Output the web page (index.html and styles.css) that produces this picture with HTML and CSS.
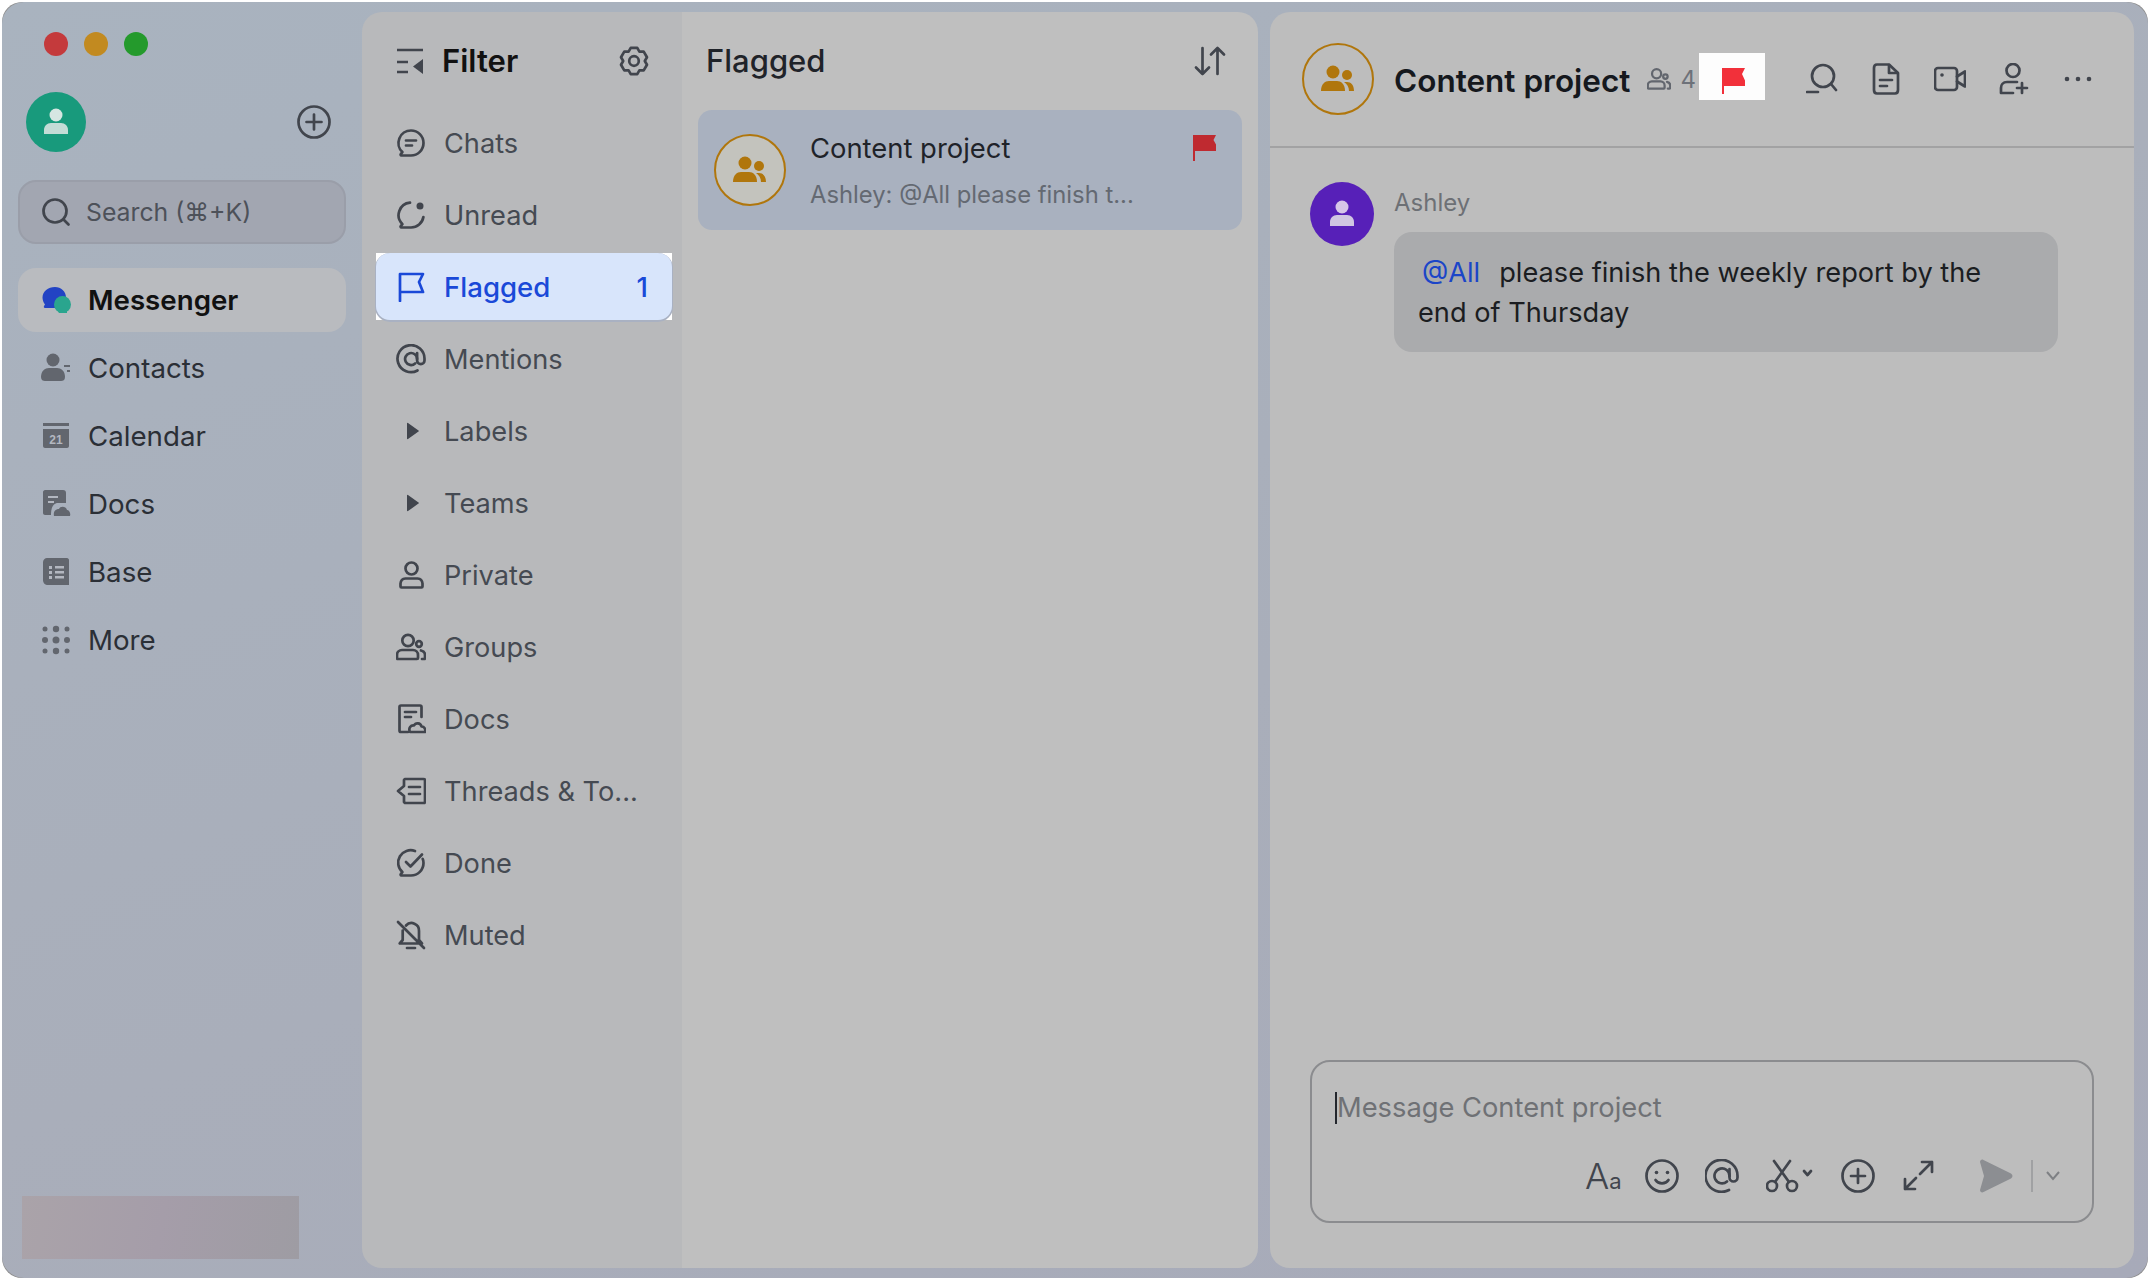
FILE: index.html
```html
<!DOCTYPE html>
<html lang="en">
<head>
<meta charset="utf-8">
<title>Messenger</title>
<link rel="stylesheet" href="styles.css">
</head>
<body>
<div class="frame">
<div class="window">
  <aside class="sidebar">
    <div class="lights"><i class="light red"></i><i class="light amber"></i><i class="light green"></i></div>
    <div class="user-row">
      <div class="avatar-me"><svg width="36" height="36" viewBox="0 0 36 36"><circle cx="18" cy="11" r="6.500" fill="#d6e6e2"/><path d="M6 30v-4c0-4 3-7 7-7h10c4 0 7 3 7 7v4z" fill="#c3dcd6"/></svg></div>
      <svg class="ico" width="36" height="36" viewBox="0 0 36 36"><circle cx="18" cy="18" r="15.500"/><path d="M18 10.500v15M10.500 18h15"/></svg>
    </div>
    <div class="search">
      <svg class="ico" width="30" height="30" viewBox="0 0 30 30"><circle cx="14" cy="14" r="11.500"/><path d="M22.500 22.500l5 5"/></svg>
      <span>Search (⌘+K)</span>
    </div>
    <nav class="nav">
      <a class="nav-item current">
        <svg width="32" height="32" viewBox="0 0 32 32"><path d="M15 3c6 0 11 4.500 11 10.500 0 6-4.500 10-10 10.500H5c-1 0-1.500-1-1-2l1-1.500C3.500 18.500 2.500 16 2.500 13.500 2.500 7.500 8 3 15 3z" fill="#2243c4"/><circle cx="22.500" cy="20.500" r="8.500" fill="#2aa58e"/><path d="M17 26h10v3H19z" fill="#2aa58e"/></svg>
        <span>Messenger</span>
      </a>
      <a class="nav-item">
        <svg width="32" height="32" viewBox="0 0 32 32"><circle cx="13" cy="8" r="6.500" fill="#62666e"/><path d="M1 25c0-6 4-9 8-9h8c4 0 8 3 8 9 0 3-2 4-4 4H5c-2 0-4-1-4-4z" fill="#62666e"/><path d="M24 13h6v2h-6zM27 18h3v2h-3z" fill="#62666e"/></svg>
        <span>Contacts</span>
      </a>
      <a class="nav-item">
        <svg width="32" height="32" viewBox="0 0 32 32"><path d="M3 3h26v3H3z" fill="#62666e"/><path d="M3 9h26v17c0 1-1 2-2 2H5c-1 0-2-1-2-2z" fill="#62666e"/><text x="16" y="24" class="cal-num">21</text></svg>
        <span>Calendar</span>
      </a>
      <a class="nav-item">
        <svg width="32" height="32" viewBox="0 0 32 32"><path d="M5 2h18c2 0 3 1 3 3v10h-8c-4 0-7 4-7 11v1H5c-1 0-2-1-2-2V4c0-1 1-2 2-2z" fill="#62666e"/><path d="M8 8h10v2H8zM8 13h6v2H8z" fill="#b3b7c0"/><path d="M14 28c-1-5 2-7 5-7 1-3 7-3 8 1 2 0 4 3 3 6z" fill="#62666e"/></svg>
        <span>Docs</span>
      </a>
      <a class="nav-item">
        <svg width="32" height="32" viewBox="0 0 32 32"><path d="M7 2h20c1 0 2 1 2 2v25H8c-3 0-5-2-5-5V6c0-2 2-4 4-4z" fill="#62666e"/><path d="M9 10h3v3H9zM15 10h9v2.500h-9zM9 15h3v3H9zM15 15h9v2.500h-9zM9 20h3v3H9zM15 20h9v2.500h-9z" fill="#b3b7c0"/></svg>
        <span>Base</span>
      </a>
      <a class="nav-item">
        <svg width="32" height="32" viewBox="0 0 32 32" fill="#62666e"><circle cx="5" cy="5" r="2.500"/><circle cx="16" cy="5" r="3.200"/><circle cx="27" cy="5" r="2.500"/><circle cx="5" cy="16" r="3"/><circle cx="16" cy="16" r="3.500"/><circle cx="27" cy="16" r="3"/><circle cx="5" cy="27" r="2.500"/><circle cx="16" cy="27" r="3.200"/><circle cx="27" cy="27" r="2.500"/></svg>
        <span>More</span>
      </a>
    </nav>
    <div class="redacted"></div>
  </aside>

  <section class="filter-panel">
    <header class="filter-head">
      <svg width="28" height="26" viewBox="0 0 28 26" class="filter-ico"><path d="M1 2h26M1 14h11M1 24h11" fill="none" stroke="currentColor" stroke-width="2.500"/><path d="M27 11v15l-10-7.500z" fill="currentColor"/></svg>
      <h2>Filter</h2>
      <svg class="ico gear" width="30" height="30" viewBox="0 0 30 30"><path d="M11.730 1.900L18.270 1.900 20.400 5.650 24.710 5.620 27.980 11.280 25.800 15 27.980 18.720 24.710 24.380 20.400 24.350 18.270 28.100 11.730 28.100 9.600 24.350 5.290 24.380 2.020 18.720 4.200 15 2.020 11.280 5.290 5.620 9.600 5.650z"/><circle cx="15" cy="15" r="4.800"/></svg>
    </header>
    <ul class="filter-list">
      <li class="row"><svg class="ico" width="30" height="30" viewBox="0 0 30 30"><path d="M15 2.500a12.500 12.500 0 0 1 0 25H5.500c-1 0-1.200-1-.6-1.600l1.500-1.800A12.500 12.500 0 0 1 15 2.500z"/><path d="M10 12.500h10M10 17.500h6"/></svg><span>Chats</span></li>
      <li class="row"><svg class="ico" width="30" height="30" viewBox="0 0 30 30"><path d="M14 2.700A12.500 12.500 0 0 0 6.400 24.100l-1.500 1.800c-.6.600-.4 1.600.6 1.600H15A12.500 12.500 0 0 0 27.400 17"/><circle cx="24" cy="6" r="3.500" class="solid"/></svg><span>Unread</span></li>
      <li class="row-frame"><div class="row active"><svg class="ico" width="30" height="30" viewBox="0 0 30 30"><path d="M4 29V2h23l-4 8 4 10H4"/></svg><span>Flagged</span><b class="count">1</b></div></li>
      <li class="row"><svg class="ico" width="30" height="30" viewBox="0 0 30 30"><path d="M21.500 26.500A13.500 13.500 0 1 1 28.500 15v1.500a3.700 3.700 0 0 1-7.400 0V15a6 6 0 1 0-2 4.500"/><path d="M21.100 15v-6"/></svg><span>Mentions</span></li>
      <li class="row"><svg width="30" height="30" viewBox="0 0 30 30"><path d="M11 7.500v15a.7.700 0 0 0 1 .6l10.500-7.500a.7.700 0 0 0 0-1.200L12 6.900a.7.700 0 0 0-1 .6z" fill="#41454d"/></svg><span>Labels</span></li>
      <li class="row"><svg width="30" height="30" viewBox="0 0 30 30"><path d="M11 7.500v15a.7.700 0 0 0 1 .6l10.500-7.500a.7.700 0 0 0 0-1.200L12 6.900a.7.700 0 0 0-1 .6z" fill="#41454d"/></svg><span>Teams</span></li>
      <li class="row"><svg class="ico" width="30" height="30" viewBox="0 0 30 30"><circle cx="15.500" cy="8.500" r="6"/><path d="M9.500 18.500h12a5.500 5.500 0 0 1 5 5v3a1 1 0 0 1-1 1H5.500a1 1 0 0 1-1-1v-3a5.500 5.500 0 0 1 5-5z"/></svg><span>Private</span></li>
      <li class="row"><svg class="ico" width="30" height="30" viewBox="0 0 30 30"><circle cx="12" cy="8.500" r="5.700"/><path d="M6 18h11a5 5 0 0 1 5 5v3a1 1 0 0 1-1 1H2a1 1 0 0 1-1-1v-3a5 5 0 0 1 5-5z"/><circle cx="23" cy="12" r="2.800"/><path d="M25 18.500c2 .5 4 2 4 4.500v3a1 1 0 0 1-1 1h-2"/></svg><span>Groups</span></li>
      <li class="row"><svg class="ico" width="30" height="30" viewBox="0 0 30 30"><path d="M12 28H5c-1 0-1.500-.5-1.500-1.500V3c0-1 .5-1.500 1.500-1.500h19c1 0 1.500.5 1.500 1.500v10"/><path d="M9 8h11M9 13h6"/><path d="M14 28c-2-4 1-7 4-6.500 1.500-3 6.500-3 7.500 1 3 0 4.500 3 3.500 5.500z"/></svg><span>Docs</span></li>
      <li class="row"><svg class="ico" width="30" height="30" viewBox="0 0 30 30"><path d="M9 3h18.500c1 0 1.500.5 1.500 1.500v21c0 1-.5 1.500-1.500 1.500H9l-1-1v-6l-6-5 6-5V4z"/><path d="M13 11h11M13 18h11"/></svg><span>Threads &amp; To...</span></li>
      <li class="row"><svg class="ico" width="30" height="30" viewBox="0 0 30 30"><path d="M19 3A12.500 12.500 0 0 0 6.400 24.100l-1.500 1.800c-.6.600-.4 1.600.6 1.600H15A12.500 12.500 0 0 0 27.500 15c0-1.500-.2-3-.8-4"/><path d="M10 14l4.500 4.500L26 6.500"/></svg><span>Done</span></li>
      <li class="row"><svg class="ico" width="30" height="30" viewBox="0 0 30 30"><path d="M10 5.500A7.500 7.500 0 0 1 23 11v9l3 3.500M6.700 10.500V20l-3 3.500H22M11 28h8M2 2l26 26"/></svg><span>Muted</span></li>
    </ul>
  </section>

  <section class="list-panel">
    <header class="list-head">
      <h2>Flagged</h2>
      <svg class="ico" width="32" height="30" viewBox="0 0 32 30"><path d="M8.500 2v26M2 21.500L8.500 28l6.500-6.500M23.500 28V2M17 8.500L23.500 2 30 8.500"/></svg>
    </header>
    <article class="conv">
      <div class="group-avatar"><svg width="36" height="30" viewBox="0 0 36 30"><circle cx="13" cy="8" r="6.500" fill="#b0760c"/><circle cx="27" cy="11" r="5" fill="#b0760c"/><path d="M1 27c0-7 4-10 8-10h8c4 0 8 3 8 10z" fill="#b0760c"/><path d="M24 18h3c4 0 7 3 7 9h-5c0-4-2-7-5-9z" fill="#b0760c"/></svg></div>
      <div class="conv-body">
        <div class="conv-title"><span>Content project</span><svg width="24" height="28" viewBox="0 0 24 28"><path d="M1 1h23l-2.500 5 2.500 4.500V17H3v10H1z" fill="#bf2a30"/></svg></div>
        <p class="conv-preview">Ashley: @All please finish t...</p>
      </div>
    </article>
  </section>

  <section class="chat-panel">
    <header class="chat-head">
      <div class="group-avatar"><svg width="36" height="30" viewBox="0 0 36 30"><circle cx="13" cy="8" r="6.500" fill="#b0760c"/><circle cx="27" cy="11" r="5" fill="#b0760c"/><path d="M1 27c0-7 4-10 8-10h8c4 0 8 3 8 10z" fill="#b0760c"/><path d="M24 18h3c4 0 7 3 7 9h-5c0-4-2-7-5-9z" fill="#b0760c"/></svg></div>
      <h1>Content project</h1>
      <div class="members">
        <svg class="ico thin" width="24" height="24" viewBox="0 0 30 30"><circle cx="12" cy="8.500" r="5.700"/><path d="M6 18h11a5 5 0 0 1 5 5v3a1 1 0 0 1-1 1H2a1 1 0 0 1-1-1v-3a5 5 0 0 1 5-5z"/><circle cx="23" cy="12" r="2.800"/><path d="M25 18.500c2 .5 4 2 4 4.500v3a1 1 0 0 1-1 1h-2"/></svg>
        <span>4</span>
      </div>
      <div class="flag-tile"><svg width="24" height="26" viewBox="0 0 24 26"><path d="M1 0h23l-3 6 3 6.500V18H3v8H1z" fill="#f2303a"/></svg></div>
      <div class="head-tools">
        <svg class="ico" width="32" height="32" viewBox="0 0 32 32"><circle cx="17" cy="13" r="11"/><path d="M25 21l5 6M1 29h11"/></svg>
        <svg class="ico" width="32" height="32" viewBox="0 0 32 32"><path d="M7 1.500h12l9 8.500v17c0 2-1 3.500-3 3.500H7c-2 0-3-1.500-3-3.500V5c0-2 1-3.500 3-3.500z"/><path d="M19 2v8h8.500M10 17h12M10 23h7"/></svg>
        <svg class="ico" width="32" height="32" viewBox="0 0 32 32"><rect x="1" y="5" width="22" height="22" rx="3"/><path d="M23 13.500l8-5v15l-8-5"/><circle cx="8" cy="12" r="1.800" class="solid"/></svg>
        <svg class="ico" width="32" height="32" viewBox="0 0 32 32"><circle cx="15" cy="7.500" r="6.500"/><path d="M19 19H9c-4 0-6 3-6 6v5h12M24 20v10M19 25h10"/></svg>
        <svg width="32" height="32" viewBox="0 0 32 32" fill="#41454d"><circle cx="5" cy="16" r="2.300"/><circle cx="16" cy="16" r="2.300"/><circle cx="27" cy="16" r="2.300"/></svg>
      </div>
    </header>
    <div class="messages">
      <div class="avatar-sender"><svg width="36" height="36" viewBox="0 0 36 36"><circle cx="18" cy="11" r="6.500" fill="#d6c6e8"/><path d="M6 30v-4c0-4 3-7 7-7h10c4 0 7 3 7 7v4z" fill="#d0c6e2"/></svg></div>
      <div class="msg">
        <div class="msg-name">Ashley</div>
        <div class="bubble">
          <div class="bubble-line"><span class="at">@All</span><span>please finish the weekly report by the</span></div>
          <div class="bubble-line">end of Thursday</div>
        </div>
      </div>
    </div>
    <div class="composer">
      <div class="placeholder">Message Content project</div>
      <div class="tools">
        <span class="aa">A<small>a</small></span>
        <svg class="ico" width="34" height="34" viewBox="0 0 34 34"><circle cx="17" cy="17" r="15.500"/><circle cx="11.500" cy="13.500" r="1.800" class="solid"/><circle cx="22.500" cy="13.500" r="1.800" class="solid"/><path d="M10.500 21c3 4.500 10 4.500 13 0"/></svg>
        <svg class="ico" width="34" height="34" viewBox="0 0 34 34"><path d="M24 31A16 16 0 1 1 32.500 17v1.500a4 4 0 0 1-8 0V17a7.500 7.500 0 1 0-2.500 5.500"/><path d="M24.500 17v-7"/></svg>
        <svg class="ico cut" width="48" height="34" viewBox="0 0 48 34"><circle cx="6" cy="27" r="5"/><circle cx="26" cy="27" r="5"/><path d="M9 23L24 2M23 23L8 2"/><path d="M38 12l3.500 4 3.500-4"/></svg>
        <svg class="ico add" width="34" height="34" viewBox="0 0 34 34"><circle cx="17" cy="17" r="15.500"/><path d="M17 10v14M10 17h14"/></svg>
        <svg class="ico" width="34" height="34" viewBox="0 0 34 34"><path d="M19 15L31 3M21 3h10v10M15 19L4 30M4 20v10h10"/></svg>
        <svg class="send" width="34" height="34" viewBox="0 0 34 34"><path d="M1 3c0-2 2-3 3.500-2L32 14.500c2 1.500 2 3.500 0 5L4.500 33c-1.500 1-3.500 0-3.500-2l4-14z" fill="#8c8e92"/></svg>
        <i class="tool-sep"></i>
        <svg class="chev" width="14" height="12" viewBox="0 0 14 12"><path d="M1 2l6 7 6-7" fill="none" stroke="#7e8084" stroke-width="2"/></svg>
      </div>
    </div>
  </section>
</div>
</div>
</body>
</html>
```
FILE: styles.css
```css
* { box-sizing: border-box; }
html, body { margin: 0; height: 100%; background: #fff; }
body { font-family: Inter, "Noto Sans", "DejaVu Sans", sans-serif; color: #1f2329; overflow: hidden; }
h1, h2, p, ul { margin: 0; padding: 0; }
ul { list-style: none; }
svg { display: block; flex: none; }

.ico { fill: none; stroke: #41454d; stroke-width: 2.7; stroke-linecap: round; stroke-linejoin: round; }
.ico .solid { fill: #41454d; stroke: none; }
.ico.thin { stroke: #62666e; stroke-width: 2.8; }

.frame { margin: 2px; height: 1276px; background: #8e8e8e; border-radius: 20px; }
.window { display: flex; height: 100%; padding: 10px 14px 10px 0; border-radius: 22px; background: linear-gradient(160deg, #a9b3bf 0%, #a9aeba 55%, #a7aab9 100%); }

/* sidebar */
.sidebar { width: 360px; flex: none; display: flex; flex-direction: column; margin-top: -10px; margin-bottom: -10px; padding: 30px 16px 19px 16px; }
.lights { display: flex; gap: 16px; padding-left: 26px; }
.light { width: 24px; height: 24px; border-radius: 50%; }
.red { background: #c43a3c; }
.amber { background: #c28a20; }
.green { background: #249a2c; }
.user-row { display: flex; align-items: center; justify-content: space-between; margin-top: 36px; padding: 0 14px 0 8px; }
.avatar-me { width: 60px; height: 60px; border-radius: 50%; background: #189a7c; display: flex; align-items: center; justify-content: center; }
.search { display: flex; align-items: center; gap: 15px; height: 64px; margin-top: 28px; padding-left: 21px; border: 2px solid #9a9ea9; border-radius: 18px; background: #a2a6b1; color: #4d5159; font-size: 24.800px; }
.nav { display: flex; flex-direction: column; gap: 4px; margin-top: 24px; }
.nav-item { display: flex; align-items: center; gap: 16px; height: 64px; padding-left: 22px; border-radius: 18px; font-size: 27.700px; color: #2b2f36; }
.nav-item.current { background: #b9bbbf; color: #111; font-weight: 600; }
.cal-num { font: 700 12px "Liberation Sans", sans-serif; fill: #b3b7c0; text-anchor: middle; }
.redacted { width: 277px; height: 63px; margin-top: auto; margin-left: 4px; background: linear-gradient(100deg, #aaa3a9 0%, #a59da9 50%, #9e9ca3 100%); }

/* filter */
.filter-panel { width: 320px; flex: none; background: #b8b9bb; border-radius: 20px 0 0 20px; }
.filter-head { display: flex; align-items: center; height: 97px; padding: 0 33px 0 34px; color: #41454d; }
.filter-head h2 { margin-left: 18px; font-size: 31px; font-weight: 600; color: #111; }
.gear { margin-left: auto; }
.filter-list { display: flex; flex-direction: column; gap: 5px; padding: 0 10px 0 14px; }
.row { display: flex; align-items: center; gap: 18px; height: 67px; padding: 0 24px 0 20px; border-radius: 14px; font-size: 27.200px; color: #454a52; }
.row > span { padding-top: 1px; }
.row-frame { background: #fff; }
.row.active { background: #d8e5fb; color: #1a49d8; font-weight: 500; box-shadow: 0 1px 0 1px #a9b1c2; font-size: 27.600px; }
.row.active > span { padding-top: 0; }
.row.active .ico { stroke: #1a49d8; }
.count { margin-left: auto; font-weight: 500; }

/* list */
.list-panel { width: 576px; flex: none; background: #bfbfbf; border-radius: 0 20px 20px 0; }
.list-head { display: flex; align-items: center; justify-content: space-between; height: 97px; padding: 0 32px 0 24px; }
.list-head h2 { font-size: 31px; font-weight: 500; color: #1f2329; }
.conv { display: flex; gap: 24px; height: 120px; margin: 1px 16px 0; padding: 24px 26px 0 16px; border-radius: 14px; background: #a9b1bf; }
.group-avatar { width: 72px; height: 72px; flex: none; border: 2.500px solid #b0760c; border-radius: 50%; background: #c3c3bd; display: flex; align-items: center; justify-content: center; }
.conv-body { flex: 1; min-width: 0; margin-top: -6px; }
.conv-title { display: flex; justify-content: space-between; align-items: flex-start; line-height: 40px; font-size: 27.400px; color: #1f2329; }
.conv-title svg { margin-top: 6px; }
.conv-preview { margin-top: 7px; line-height: 40px; font-size: 23.800px; color: #646972; }

/* chat */
.chat-panel { flex: 1; margin-left: 12px; display: flex; flex-direction: column; background: #bdbdbd; border-radius: 20px; }
.chat-head { display: flex; align-items: center; height: 136px; padding: 0 40px 0 32px; border-bottom: 2px solid #a2a2a3; }
.chat-head .group-avatar { background: transparent; }
.chat-head h1 { margin-left: 20px; padding-top: 2px; font-size: 31.500px; font-weight: 600; color: #15181d; }
.members { display: flex; align-items: center; gap: 9px; margin-left: 17px; font-size: 24px; color: #6d7179; }
.flag-tile { display: flex; justify-content: center; width: 66px; height: 47px; margin: 0 0 6px 3px; padding: 15px 0 0 2px; background: #fdfdfd; }
.head-tools { display: flex; gap: 32px; margin-left: auto; }
.messages { flex: 1; display: flex; gap: 20px; padding: 34px 0 0 40px; }
.avatar-sender { width: 64px; height: 64px; border-radius: 50%; background: #5720b8; display: flex; align-items: center; justify-content: center; }
.msg-name { height: 50px; line-height: 42px; font-size: 24px; color: #6d7075; }
.bubble { width: 664px; height: 120px; padding: 21px 24px 19px; border-radius: 18px; background: #aaabad; font-size: 27.200px; line-height: 40px; color: #1b1d21; }
.at { margin: 0 19px 0 4px; color: #1b45c8; }

.composer { display: flex; flex-direction: column; height: 163px; margin: 0 40px 45px 40px; padding: 30px 32.500px 28px 24px; border: 2px solid #8b8c8f; border-radius: 20px; }
.placeholder { align-self: flex-start; margin-left: 1px; box-shadow: -2px 0 0 #24272d; line-height: 32px; font-size: 27.300px; color: #6f7175; }
.tools { display: flex; align-items: center; gap: 26px; margin-top: auto; }
.aa { margin-left: auto; margin-right: 1px; width: 33px; height: 34px; line-height: 34px; font-size: 36px; font-weight: 300; color: #41454d; white-space: nowrap; }
.aa small { font-size: 22px; font-weight: 400; }
.cut { margin-left: 1px; }
.add { margin-left: 1px; }
.send { margin-left: 18px; }
.tool-sep { width: 2px; height: 32px; margin-left: -8px; background: #a0a1a3; }
.chev { margin-left: -13.500px; }
```
